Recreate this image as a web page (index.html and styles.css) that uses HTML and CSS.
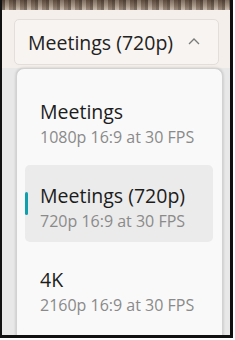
FILE: index.html
```html
<!DOCTYPE html>
<html lang="en">
<head>
    <meta charset="UTF-8">
    <meta name="viewport" content="width=device-width, initial-scale=1.0">
    <title>Camera resolution</title>
    <link rel="stylesheet" href="styles.css">
</head>
<body>

<div class="frame">
    <div class="photo"></div>
    <div class="top-area">
        <button class="combo">
            <span>Meetings (720p)</span>
            <svg class="chevron" width="12" height="8" viewBox="0 0 12 8">
                <path d="M1 7 L6 2 L11 7" fill="none" stroke="#7a7a7a" stroke-width="1.3"/>
            </svg>
        </button>
    </div>
    <div class="lower-area">
        <div class="menu">
            <div class="item">
                <div class="item-title">Meetings</div>
                <div class="item-sub">1080p 16:9 at 30 FPS</div>
            </div>
            <div class="item selected">
                <div class="item-title">Meetings (720p)</div>
                <div class="item-sub">720p 16:9 at 30 FPS</div>
            </div>
            <div class="item">
                <div class="item-title">4K</div>
                <div class="item-sub">2160p 16:9 at 30 FPS</div>
            </div>
        </div>
    </div>
</div>

</body>
</html>
```

FILE: styles.css
```css
body {
    margin: 0;
    background-color: #fff;
    font-family: "Open Sans", "Noto Sans", sans-serif;
}
.frame {
    width: 228px;
    height: 335px;
    border: 2px solid #111;
    border-right-width: 3px;
    border-bottom-width: 3px;
    border-top-width: 0;
    overflow: hidden;
    display: flex;
    flex-direction: column;
    background-color: #ececec;
}
.photo {
    height: 10px;
    flex-shrink: 0;
    background:
        repeating-linear-gradient(90deg, rgba(60,45,35,0.5) 0 3px, rgba(200,185,170,0.3) 3px 7px, rgba(90,70,55,0.4) 7px 11px),
        linear-gradient(180deg, #5e4e42, #9a8a7c 60%, #c9bcb0);
}
.top-area {
    background-color: #f4efeb;
    padding: 9px 11px 3px 12px;
    flex-shrink: 0;
}
.combo {
    width: 205px;
    height: 46px;
    display: flex;
    align-items: center;
    justify-content: space-between;
    padding: 0 18px 0 13px;
    box-sizing: border-box;
    background-color: #f8f4f1;
    border: 1px solid #e4deda;
    border-radius: 5px;
    font-family: inherit;
    font-size: 19.5px;
    color: #222;
}
.chevron {
    margin-top: -2px;
}
.lower-area {
    flex: 1;
    padding: 0 7px 0 14px;
    background-color: #e8e8e8;
}
.menu {
    height: 300px;
    background-color: #f9f9f9;
    border: 1px solid #d2d2d2;
    border-radius: 8px;
    box-shadow: 0 0 3px rgba(0, 0, 0, 0.2);
    padding: 12px 9px 0 8px;
}
.item {
    position: relative;
    height: 77px;
    margin-bottom: 7px;
    padding: 18px 0 0 15px;
    box-sizing: border-box;
    border-radius: 5px;
}
.item.selected {
    background-color: #ebebeb;
}
.item.selected::before {
    content: "";
    position: absolute;
    left: 0;
    top: 27px;
    width: 3px;
    height: 23px;
    border-radius: 2px;
    background-color: #119fae;
}
.item-title {
    font-size: 19.5px;
    line-height: 26px;
    color: #1c1c1c;
}
.item-sub {
    margin-top: 1px;
    font-size: 16px;
    line-height: 22px;
    color: #8a8a8a;
}
```
